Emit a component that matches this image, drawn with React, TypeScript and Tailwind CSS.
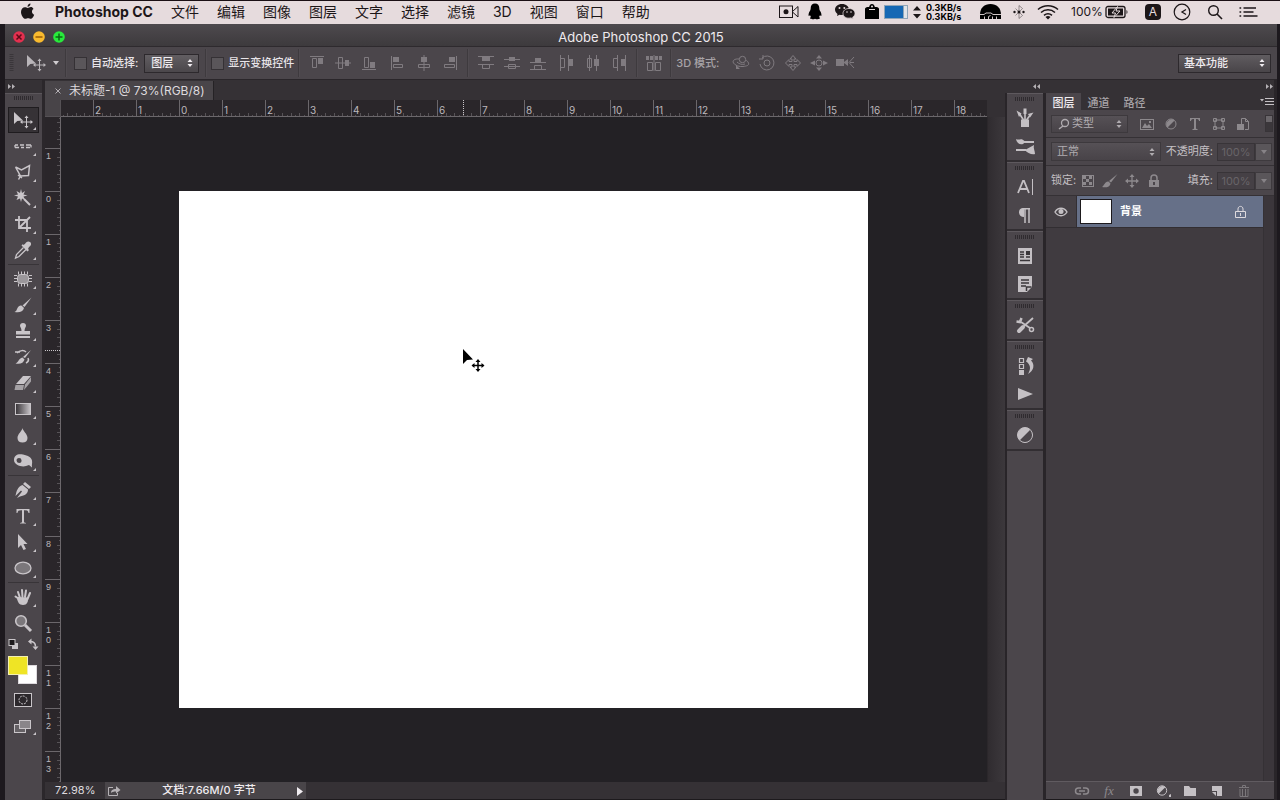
import React from "react";

type IconProps = { w?: number; h?: number; className?: string; children: React.ReactNode };

function Icon({ w = 16, h = 16, className = "", children }: IconProps) {
  return (
    <svg width={w} height={h} viewBox={`0 0 ${w} ${h}`} fill="none" stroke="currentColor" className={`block shrink-0 ${className}`} aria-hidden="true">
      {children}
    </svg>
  );
}

const solid = { fill: "currentColor", stroke: "none" };

const MENUS = ["文件", "编辑", "图像", "图层", "文字", "选择", "滤镜", "3D", "视图", "窗口", "帮助"];

function MenuBar() {
  return (
    <header className="flex h-6 shrink-0 items-center border-t border-[#1a0f14] bg-[#e6dbdd] pr-[22px] pb-[2px] pl-5 text-sm text-[#1c1618]">
      <button aria-label="Apple" className="mr-5">
        <Icon w={15} h={17}>
          <path {...solid} d="M10.500 0.500c.1 1.800-1.300 3.400-3 3.300C7.300 2.200 8.900.7 10.500.5zM13.500 6c-2.300 1.400-1.900 4.700.7 5.800-.7 1.900-2 4-3.400 4-1 0-1.400-.6-2.700-.6s-1.700.6-2.700.6C3.300 15.800 1 12 1 9c0-3.200 1.900-4.800 3.900-4.800 1.200 0 2 .7 2.900.7s1.600-.8 3.100-.8c1 0 1.900.6 2.600 1.900z" />
        </Icon>
      </button>
      <nav className="flex items-center gap-[18px] whitespace-nowrap">
        <button className="font-bold">Photoshop CC</button>
        {MENUS.map((m) => (
          <button key={m}>{m}</button>
        ))}
      </nav>
      <div className="ml-auto flex items-center">
        <Icon w={22} h={16}>
          <rect x="1.500" y="2" width="13" height="11.500" />
          <path d="M14.500 7.500l5.500-5v10.500l-5.500-5" />
          <circle {...solid} cx="8" cy="7.800" r="2.500" />
        </Icon>
        <Icon w={14} h={17} className="ml-2 text-black">
          <path {...solid} d="M7 0.500c2.800 0 4.300 1.900 4.300 4.500 0 1.300.2 1.900.8 3 1 1.500 1.500 3 1.300 4.400-.2.900-.8.500-1.400-.4-.2.900-.6 1.500-1.200 2.100 1 .4 1.400.9 1 1.500-.6.900-3.700.8-4.800.1-1 .7-4.200.8-4.800-.1-.4-.6 0-1.100 1-1.500-.6-.6-1-1.200-1.200-2.100-.6.900-1.200 1.300-1.400.4C.4 11 .9 9.500 1.900 8c.6-1.100.8-1.700.8-3C2.700 2.400 4.200.5 7 .5z" />
        </Icon>
        <Icon w={22} h={17} className="ml-3">
          <path {...solid} d="M8 1C3.800 1 1 3.500 1 6.600c0 1.800 1 3.300 2.500 4.300L3 13l2.500-1.300c.8.2 1.600.3 2.500.3C12.200 12 15 9.600 15 6.600 15 3.500 12.200 1 8 1z" />
          <path fill="currentColor" stroke="#e6dbdd" strokeWidth=".8" d="M15 5.500c-3.500 0-6 2.200-6 4.900s2.500 4.800 6 4.800c.7 0 1.400-.1 2-.3l2.200 1.100-.5-1.900c1.500-.9 2.300-2.200 2.300-3.700 0-2.700-2.500-4.900-6-4.900z" />
          <g fill="#e6dbdd" stroke="none"><circle cx="5.500" cy="5" r="1" /><circle cx="10.300" cy="5" r="1" /><circle cx="13" cy="9" r=".8" /><circle cx="17" cy="9" r=".8" /></g>
        </Icon>
        <Icon w={16} h={17} className="ml-2 text-black">
          <path {...solid} d="M1 6c0-1 1-2 2.500-2h1.700C5.300 2.500 6.300 1 8 1s2.700 1.500 2.800 3h1.700C14 4 15 5 15 6v10H1z" />
          <path stroke="#e6dbdd" d="M5 6.500h6" />
          <circle cx="8" cy="3.500" r="1" fill="#e6dbdd" stroke="none" />
        </Icon>
        <Icon w={24} h={16} className="ml-1">
          <rect x="0" y="1" width="24" height="14" fill="#8fa5b8" stroke="none" />
          <rect x="1" y="2" width="18" height="12" fill="#1668b4" stroke="none" />
          <rect x="20" y="2" width="3" height="12" fill="#dfe3e8" stroke="none" />
        </Icon>
        <Icon w={10} h={16} className="ml-1">
          <path {...solid} d="M5 2l4 4.500H1zM5 14.500L1 10h8z" />
        </Icon>
        <div className="ml-1 w-[38px] text-[9px] leading-[9px] font-bold whitespace-nowrap text-black">
          <div>0.3KB/s</div>
          <div>0.3KB/s</div>
        </div>
        <Icon w={21} h={17} className="ml-4 text-black">
          <path {...solid} d="M0 11.500C0 5 4.500 1 10.500 1S21 5 21 11.500V16H0z" />
          <path stroke="#e6dbdd" strokeWidth=".9" d="M0 11.500h4l2-1.500h5l2 1.500h8M4.500 16v-2.500M8.500 16v-2.500l2-1M12.500 16v-2.500M16.500 16v-2.500" />
        </Icon>
        <Icon w={12} h={16} className="ml-3">
          <path d="M2.500 4.500l7 7L6 14.500v-13l3.500 3-7 7" strokeOpacity=".4" />
          <circle {...solid} cx="1.500" cy="8" r="1.200" /><circle {...solid} cx="6" cy="8" r="1.500" /><circle {...solid} cx="10.500" cy="8" r="1.200" />
        </Icon>
        <Icon w={22} h={16} className="ml-3">
          <path strokeWidth="1.600" d="M1 5.500c5.500-5 14.500-5 20 0M4 8.500c4-3.600 10-3.600 14 0M7 11.300c2.500-2 5.500-2 8 0" />
          <path {...solid} d="M11 15.500l-2.500-2.500c1.500-1.200 3.500-1.200 5 0z" />
        </Icon>
        <span className="ml-3 w-[30px] text-xs whitespace-nowrap">100%</span>
        <Icon w={24} h={14} className="ml-1">
          <rect x="1" y="1.500" width="19" height="11" rx="2" strokeWidth="1.300" />
          <rect {...solid} x="3" y="3.500" width="15" height="7" />
          <path {...solid} d="M21.500 5c1.300.5 1.300 3.500 0 4z" />
          <path fill="currentColor" stroke="#e6dbdd" d="M12.500 1.500L7 8h3.500L9 12.500 15 6h-4z" />
        </Icon>
        <span className="ml-4 flex h-4 w-4 items-center justify-center rounded-sm bg-[#1c1618] text-xs text-[#e6dbdd]">A</span>
        <Icon w={18} h={18} className="ml-3">
          <circle cx="9" cy="9" r="7.800" strokeWidth="1.200" />
          <path strokeWidth="1.300" d="M13 6.500L9 9l4 2.500" />
        </Icon>
        <Icon className="ml-4">
          <circle cx="6.500" cy="6.500" r="4.800" strokeWidth="1.400" />
          <path strokeWidth="1.600" d="M10 10l5 5" />
        </Icon>
        <Icon w={19} h={14} className="ml-4">
          <path strokeWidth="1.600" d="M4.500 3H17M4.500 7H14.500M4.500 11H18.500M.5 3h1.700M.5 7h1.700M.5 11h1.700" />
        </Icon>
      </div>
    </header>
  );
}

function TitleBar() {
  return (
    <div className="grid h-[23px] shrink-0 grid-cols-[1fr_auto_1fr] items-center border-b border-[#2e2a2e] bg-gradient-to-b from-[#4e4a4e] to-[#3d3a3d] pt-[3px] pr-2 pl-2">
      <div className="flex gap-2">
        <button aria-label="关闭" className="text-[#5d0916]">
          <Icon w={12} h={12}><circle cx="6" cy="6" r="5.800" fill="#e3304f" stroke="none" /><path strokeWidth="1.500" d="M3.500 3.500l5 5M8.500 3.500l-5 5" /></Icon>
        </button>
        <button aria-label="最小化" className="text-[#985b05]">
          <Icon w={12} h={12}><circle cx="6" cy="6" r="5.800" fill="#f9ba2e" stroke="none" /><path strokeWidth="1.500" d="M2.500 6h7" /></Icon>
        </button>
        <button aria-label="缩放" className="text-[#086b12]">
          <Icon w={12} h={12}><circle cx="6" cy="6" r="5.800" fill="#28ea3c" stroke="none" /><path strokeWidth="1.500" d="M2.500 6h7M6 2.500v7" /></Icon>
        </button>
      </div>
      <h1 className="text-[13px] leading-[18px] text-[#eeeaee]">Adobe Photoshop CC 2015</h1>
    </div>
  );
}

function Grip({ vertical = false }: { vertical?: boolean }) {
  return vertical ? (
    <Icon w={5} h={18}><path stroke="#3a363a" strokeDasharray="1 1" strokeWidth="4" d="M2.500 0v18" /></Icon>
  ) : (
    <Icon w={20} h={4}><path stroke="#2f2b2f" strokeDasharray="1 1" strokeWidth="4" d="M0 2h20" /></Icon>
  );
}

const moveGlyph = (
  <>
    <path {...solid} d="M1 1v12l3.300-3L10 9.500z" />
    <path d="M13.500 5.500v11M8 11h11" />
    <path {...solid} d="M13.500 4.500l2 2.500h-4zM13.500 17.500l-2-2.500h4zM7 11l2.500-2v4zM20 11l-2.500-2v4z" />
  </>
);

const ALIGN_GROUPS: string[][][] = [
  [
    ["M1 1.500h14M3.500 3.500h4v9h-4z", "M9 3h5v6H9z"],
    ["M0 8h16M3.500 2.500h4v11h-4z", "M10 5h4v6h-4z"],
    ["M1 14.500h14M3.500 2.500h4v10h-4z", "M9 7h5v6H9z"],
  ],
  [
    ["M1.500 1v14M3.500 9.500h9v3h-9z", "M3 2h6v5H3z"],
    ["M8 0v16M2.500 9.500h11v3h-11z", "M5 2h6v5H5z"],
    ["M14.500 1v14M2.500 9.500h10v3h-10z", "M7 2h6v5H7z"],
  ],
  [
    ["M0 1.500h16M0 9.500h16M4.500 9.500h7v4h-7z", "M4 2h8v4H4z"],
    ["M0 4.500h16M0 11.500h16M4.500 9.500h7v4h-7z", "M5 2h6v4H5z"],
    ["M0 7.500h16M0 14.500h16M4.500 10.500h7v4h-7z", "M5 3h6v4H5z"],
  ],
  [
    ["M1.500 0v16M9.500 0v16M1.500 3.500h4v9h-4z", "M10 4h4v7h-4z"],
    ["M4.500 0v16M11.500 0v16M2.500 3.500h4v9h-4z", "M9 4h5v7H9z"],
    ["M6.500 0v16M14.500 0v16M2.500 3.500h4v9h-4z", "M10 4h4v7h-4z"],
  ],
];
const ALIGN_NAMES = ["顶对齐", "垂直居中", "底对齐", "左对齐", "水平居中", "右对齐", "按顶分布", "垂直分布", "按底分布", "按左分布", "水平分布", "按右分布"];

function AlignGroup({ index, className }: { index: number; className: string }) {
  return (
    <div className={`flex gap-[10px] ${className}`}>
      {ALIGN_GROUPS[index].map(([line, fill], i) => (
        <button key={line} aria-label={ALIGN_NAMES[index * 3 + i]}>
          <Icon><path d={line} /><path {...solid} d={fill} /></Icon>
        </button>
      ))}
    </div>
  );
}

function Divider() {
  return <div className="h-7 w-[2px] border-l border-[#3e3a3e] bg-[#504b50]" />;
}

function Dropdown({ label, value, options, className, textClass, icon }: { label: string; value: string; options: string[]; className: string; textClass: string; icon?: React.ReactNode }) {
  return (
    <div className={`flex items-center border bg-gradient-to-b pr-[5px] ${className} ${textClass}`}>
      {icon}
      <select aria-label={label} defaultValue={value} className="min-w-0 flex-1 appearance-none bg-transparent outline-none">
        {options.map((o) => <option key={o}>{o}</option>)}
      </select>
      <Icon w={6} h={8} className="pointer-events-none">
        <path {...solid} d="M3 0l2.500 3h-5zM3 8L.5 5h5z" />
      </Icon>
    </div>
  );
}

function CheckOption({ label, className }: { label: string; className: string }) {
  return (
    <label className={`flex items-center gap-1 whitespace-nowrap text-[#e8e4e8] ${className}`}>
      <input type="checkbox" className="h-[13px] w-[13px] appearance-none border border-[#353135] bg-[#5a565a]" />
      {label}
    </label>
  );
}

function OptionsBar() {
  return (
    <div className="flex h-[33px] shrink-0 items-center border-b border-[#2a262a] bg-[#4b464b] pr-[6px] pl-1 text-[11px] font-medium">
      <Grip vertical />
      <button aria-label="移动工具" className="ml-3 text-[#b9b5b9]"><Icon w={20} h={18}>{moveGlyph}</Icon></button>
      <button aria-label="预设" className="mr-[6px] ml-[7px] text-[#d0ccd0]"><Icon w={6} h={4}><path {...solid} d="M0 0h6L3 4z" /></Icon></button>
      <Divider />
      <CheckOption label="自动选择:" className="mr-[6px] ml-[7px]" />
      <Dropdown label="自动选择" value="图层" options={["图层", "组"]} className="h-[19px] w-[55px] border-[#2d292d] from-[#625e62] to-[#4b474b] pl-[6px]" textClass="text-[#f0ecf0]" />
      <div className="ml-[6px]"><Divider /></div>
      <CheckOption label="显示变换控件" className="mr-1 ml-1" />
      <Divider />
      <div className="flex items-center text-[#807b80]">
        <AlignGroup index={0} className="ml-[9px]" />
        <AlignGroup index={1} className="ml-[13px]" />
        <div className="ml-[9px]"><Divider /></div>
        <AlignGroup index={2} className="ml-[9px]" />
        <AlignGroup index={3} className="ml-[13px]" />
        <div className="mr-2 ml-[9px]"><Divider /></div>
        <button aria-label="自动对齐图层"><Icon><path d="M1.500 7.500h5v8h-5zM9.500 7.500h5v8h-5zM8 0v16" /><path {...solid} d="M0 1h3v4H0zM4 1h3v4H4zM9 1h3v4H9zM13 1h3v4h-3z" /></Icon></button>
        <div className="mr-1 ml-2"><Divider /></div>
        <span className="text-[11px] whitespace-nowrap text-[#a7a3a7]">3D 模式:</span>
        <div className="ml-[13px] flex gap-2">
          <button aria-label="旋转 3D 对象"><Icon w={18}><circle cx="10.500" cy="4.500" r="3.200" /><path d="M7 4C3 3.500 0 5.500 1.500 8s6 4 9.500 3.500 6.500-1 5.500-3.500-2.500-2.500-2.500-2.500M5 7c2 2 5 3 8 2" /><path {...solid} d="M4 10l4 4H4z" /></Icon></button>
          <button aria-label="滚动 3D 对象"><Icon w={18}><path d="M4 3A7 7 0 1 1 2 9M1 4h4V0" /><circle cx="9" cy="8" r="3" /></Icon></button>
          <button aria-label="拖动 3D 对象"><Icon w={18}><path d="M8 6.500V4H6l3-3.500L12 4h-2v2.500h3v-2L16.500 8 13 11.500v-2h-3V12h2l-3 3.500L6 12h2V9.500H5v2L1.500 8 5 4.500v2z" /></Icon></button>
          <button aria-label="滑动 3D 对象"><Icon w={18}><circle cx="9" cy="8" r="3" /><path {...solid} d="M9 0l3 3.500H6zM9 16l-3-3.500h6zM0 8l5-2.500v5zM18 8l-5-2.500v5z" /></Icon></button>
          <button aria-label="缩放 3D 对象"><Icon w={19}><path {...solid} d="M0 4h8v7H0zM8 7l4-3v7L8 8z" /><path d="M18 2l-5 5.500 5 5.500M14 7.500h4" /></Icon></button>
        </div>
      </div>
      <Dropdown label="工作区" value="基本功能" options={["基本功能", "绘画", "摄影"]} className="ml-auto h-[19px] w-[93px] border-[#2d292d] from-[#605c60] to-[#494549] pl-[5px]" textClass="text-[#f0ecf0]" />
    </div>
  );
}

type Tool = { name: string; flyout?: boolean; art: React.ReactNode };

const TOOL_GROUPS: Tool[][] = [
  [
    { name: "移动", flyout: true, art: moveGlyph },
    { name: "单行选框", flyout: true, art: <path strokeWidth="1.300" d="M2 8h3M7 8h4M13 8h5M2 10.500h4M8 10.500h3M13 10.500h4M2 8v2.500M18 8v2.500" /> },
    { name: "多边形套索", flyout: true, art: <path strokeWidth="1.500" d="M2.500 4l6 3 8-4.500-1 10-8 .5-5-9M7.500 13l-2 3.500M5 12l4 3" /> },
    { name: "魔棒", flyout: true, art: <><path {...solid} d="M8 0l1 4 3-2-1.500 3.500 4 1-4 1L12 11 9 9.500 8 13 7 9.500 3.500 11 5 7.500l-4-1 4-1L3.500 2 7 4z" /><path strokeWidth="2" d="M11 10l6 6" /></> },
    { name: "裁剪", flyout: true, art: <path strokeWidth="1.800" d="M6 1v12h12M2 5h12v12M7 12L17 2" /> },
    { name: "吸管", flyout: true, art: <><path {...solid} d="M10 4l2-1c1-2 3-3.500 5-2s1 4-1 5l-1 2 1 1-1.500 1.500L8.500 4.500 10 3z" /><path strokeWidth="1.300" d="M10.500 6.500l-7 7L2.500 17l3.500-1.500 7-7" /></> },
  ],
  [
    { name: "修补", flyout: true, art: <><rect x="4.500" y="4.500" width="11" height="9" rx="3" fill="#9a969a" /><path strokeDasharray="1 2" strokeWidth="3" d="M5 3h11M5 15h11M2.500 5v9M17.500 5v9" /></> },
    { name: "画笔", flyout: true, art: <><path {...solid} d="M18.500 1.500L11.500 11 9.500 9.500z" /><path {...solid} d="M9 10l2 2c-1 4-5 5-9.500 4 2-1 2-2 3-4s3-3 4.500-2z" /></> },
    { name: "仿制图章", flyout: true, art: <path {...solid} d="M10 1c2 0 3 1.200 3 2.800C13 5.500 11.500 6 11.500 9H17v3.500H3V9h5.500C8.500 6 7 5.500 7 3.800 7 2.200 8 1 10 1zM3 14h14v2H3z" /> },
    { name: "历史记录画笔", flyout: true, art: <><path {...solid} d="M18 2l-6 8-2-1zM9.500 9.500l2 2c-1 3.500-4 5-9 4 3-1 3-5 7-6z" /><path strokeWidth="1.500" d="M4 5c3-3 7-3 9-1M2 4h5M15 10c1 2 0 4-2 5" /></> },
    { name: "橡皮擦", flyout: true, art: <><path {...solid} d="M10 2h8l-7 8H3z" /><path fill="#a5a1a5" stroke="none" d="M2.500 11H11l-1 5H1.500zM12 10.500L18 3v4.500L11 16z" /></> },
    { name: "渐变", flyout: true, art: <><defs><linearGradient id="tool-gradient"><stop stopColor="#363236" /><stop offset="1" stopColor="#c9c5c9" /></linearGradient></defs><rect x="2.500" y="3.500" width="15" height="11" fill="url(#tool-gradient)" /></> },
    { name: "模糊", flyout: true, art: <path {...solid} d="M9.500 2c.5 3 5 6 5 10 0 3-2 4.500-5 4.500s-5-1.500-5-4.500c0-4 4.500-7 5-10z" /> },
    { name: "海绵", flyout: true, art: <path {...solid} fillRule="evenodd" d="M1 8c0-5 4-6.500 9-5.500s8.500 3 9 6-.5 4 0 7l-3-2.500-3 1C9 15.500 1 13 1 8zM6 6a2.500 2.500 0 1 0 .1 5A2.500 2.500 0 0 0 6 6z" /> },
  ],
  [
    { name: "钢笔", flyout: true, art: <><path {...solid} d="M12 1l6 5-2 2-6-5z" /><path {...solid} d="M9.500 4l5.500 4.500c0 4-3 6-8 7l-3 1.500 5-6.500-1-1L2.500 15c1-5 2-9 7-11z" /></> },
    { name: "文字", flyout: true, art: <path {...solid} d="M3.500 2h13v4h-1c-.3-2-1-2.700-4.500-2.700v11.200c0 1 .5 1.300 2 1.500v.5H7V16c1.500-.2 2-.5 2-1.500V3.300C5.500 3.300 4.800 4 4.500 6h-1z" /> },
    { name: "路径选择", flyout: true, art: <path {...solid} d="M5 1v14l3-3 2.500 5 2.500-1-2.500-5h4z" /> },
    { name: "椭圆", flyout: true, art: <ellipse cx="10" cy="9" rx="8" ry="5.800" fill="#7b777b" strokeWidth="1.300" /> },
  ],
  [
    { name: "抓手", flyout: true, art: <><path strokeWidth="2" strokeLinecap="round" d="M6 11L2.500 8.500M7 10L5 4M9.500 9L9 2M12 9l1-6.500M14.500 11l2.500-6" /><path {...solid} d="M5 9l10 0.500c.5 4-1 7.500-5 7.500s-5-3-6-6z" /></> },
    { name: "缩放", art: <><circle cx="8" cy="7" r="5.300" fill="#7b777b" strokeWidth="1.600" /><path strokeWidth="3" d="M12 11l6 6" /></> },
  ],
];

function ToolButton({ name, flyout, art, active }: Tool & { active?: boolean }) {
  return (
    <button
      aria-label={name}
      className={`flex h-[26px] items-center justify-center border pr-[1px] text-[#c9c5c9] ${active ? "border-[#1f1c1f] bg-[#363236]" : "border-transparent"}`}
    >
      <Icon w={27} h={20}>
        <g transform="translate(3 1)">{art}</g>
        {flyout && <path {...solid} d="M26 17v3h-3z" />}
      </Icon>
    </button>
  );
}

function Toolbox() {
  return (
    <aside className="flex w-[37px] shrink-0 flex-col bg-[#4b464b]">
      <div className="flex h-[13px] items-center bg-[#353135] pl-[3px] text-[#b5b1b5]">
        <Icon w={8} h={5}><path {...solid} d="M0 0l3 2.500L0 5zM4 0l3 2.500L4 5z" /></Icon>
      </div>
      <div className="flex h-[14px] items-start justify-center border-t border-[#5b565b] pt-[2px]"><Grip /></div>
      <div className="flex flex-col gap-px px-[3px]">
        {TOOL_GROUPS.map((group, g) => (
          <div key={g} className="flex flex-col">
            {g > 0 && <div className="mb-px h-px bg-[#383438]" />}
            {group.map((t, i) => <ToolButton key={t.name} {...t} active={g === 0 && i === 0} />)}
          </div>
        ))}
      </div>
      <div className="mt-[2px] flex justify-between px-[3px] text-[#c9c5c9]">
        <button aria-label="默认颜色"><Icon w={11} h={12}><rect x="4" y="5" width="6" height="6" fill="#c9c5c9" stroke="none" /><rect x="1" y="1.500" width="6" height="6" fill="#1d1a1d" /></Icon></button>
        <button aria-label="切换颜色"><Icon w={12} h={12}><path strokeWidth="1.500" d="M3 3.500c4 0 5.500 1.500 5.500 5" /><path {...solid} d="M1 3.500L4.500.5v6zM8.500 12L5.500 8.500h6z" /></Icon></button>
      </div>
      <div className="mt-[6px] grid grid-cols-[3px_10px_10px_9px] grid-rows-[9px_10px_9px]">
        <button aria-label="背景色" className="col-start-3 col-end-5 row-start-2 row-end-4 border border-[#dedade] bg-white" />
        <button aria-label="前景色" className="z-10 col-start-2 col-end-4 row-start-1 row-end-3 border border-[#f3efb0] bg-[#efe425]" />
      </div>
      <button aria-label="快速蒙版" className="mt-[6px] flex h-5 items-center justify-center pr-[1px] text-[#c9c5c9]">
        <Icon w={18} h={14}><rect x=".5" y=".5" width="17" height="13" fill="#2c282c" /><circle cx="9" cy="7" r="4" strokeDasharray="2 1" /></Icon>
      </button>
      <button aria-label="屏幕模式" className="mt-[6px] flex h-5 items-center justify-center text-[#c9c5c9]">
        <Icon w={26} h={18}><rect x="3.500" y="7.500" width="11" height="8" fill="#656165" /><rect x="8.500" y="3.500" width="11" height="8" fill="#898589" /><path {...solid} d="M25 15v3h-3z" /></Icon>
      </button>
    </aside>
  );
}

const UNIT = 689 / 16;

function ruler(from: number, to: number) {
  return Array.from({ length: to - from + 1 }, (_, i) => from + i);
}
const MINOR = Array.from({ length: 9 }, (_, i) => i + 1);

function HorizontalRuler() {
  const origin = 118;
  return (
    <svg height="17" className="block min-w-0 flex-1 bg-[#2a262a] text-[10px]" stroke="#6b676b" shapeRendering="crispEdges" aria-hidden="true">
      {ruler(-3, 18).map((n) => {
        const x = Math.round(origin + n * UNIT);
        return (
          <g key={n}>
            <path d={`M${x + 0.5} 0V17`} />
            {MINOR.map((m) => {
              const mx = Math.round(x + (m * UNIT) / 10) + 0.5;
              return <path key={m} d={`M${mx} ${m % 2 ? 15 : 13}V17`} strokeOpacity=".7" />;
            })}
            {n > -3 && <text x={x + 2} y="14" fill="#bcb8bc" stroke="none">{Math.abs(n)}</text>}
          </g>
        );
      })}
      <path d="M0 16.500H4000" />
      <path d="M402.500 0V16" stroke="#c9c5c9" strokeDasharray="1 1" />
    </svg>
  );
}

function VerticalRuler() {
  const origin = 74;
  return (
    <svg width="16" className="block h-full shrink-0 bg-[#2a262a] font-['Liberation_Sans',sans-serif] text-[9px]" stroke="#6b676b" shapeRendering="crispEdges" aria-hidden="true">
      {ruler(-2, 13).map((n) => {
        const y = Math.round(origin + n * UNIT);
        return (
          <g key={n}>
            <path d={`M0 ${y + 0.5}H16`} />
            {MINOR.map((m) => {
              const my = Math.round(y + (m * UNIT) / 10) + 0.5;
              return <path key={m} d={`M${m % 2 ? 14 : 12} ${my}H16`} strokeOpacity=".7" />;
            })}
            {n > -2 && String(Math.abs(n)).split("").map((d, i) => (
              <text key={i} x="1" y={y + 11 + i * 10} fill="#bcb8bc" stroke="none">{d}</text>
            ))}
          </g>
        );
      })}
      <path d="M15.500 0V4000" />
      <path d="M0 233.500H16" stroke="#c9c5c9" strokeDasharray="1 1" />
    </svg>
  );
}

function DocumentArea() {
  return (
    <main className="ml-[3px] flex min-w-0 flex-1 flex-col">
      <div className="flex h-5 shrink-0 items-end bg-[#353135]">
        <div className="flex h-[19px] items-center gap-[7px] border-r border-[#252225] bg-[#494549] pr-2 pl-[9px] text-xs whitespace-nowrap text-[#dedade]">
          <button aria-label="关闭文档" className="text-[#b5b1b5]"><Icon w={8} h={8}><path d="M1.500 1.500l5 5M6.500 1.500l-5 5" /></Icon></button>
          未标题-1 @ 73%(RGB/8)
        </div>
      </div>
      <div className="flex h-[17px] shrink-0">
        <div className="w-4 border-r border-b border-[#555155] bg-[#484448]" />
        <HorizontalRuler />
        <div className="w-[18px] bg-[#343034]" />
      </div>
      <div className="flex min-h-0 flex-1">
        <VerticalRuler />
        <div className="relative min-w-0 flex-1 overflow-hidden bg-[#232125] pt-[74px] pl-[118px]">
          <div className="h-[517px] w-[689px] bg-white" />
          <svg width="24" height="24" className="absolute top-[231px] left-[401px]" fill="#000" stroke="#000" aria-hidden="true">
            <path stroke="none" d="M1 1v15l4-4 6-.5z" />
            <path strokeWidth="1.500" fill="none" d="M16 12v11M10.500 17.500h11" />
            <path stroke="none" d="M16 11l2.500 3h-5zM16 24l-2.500-3h5zM9.500 17.500l3-2.500v5zM22.500 17.500l-3-2.500v5z" />
          </svg>
        </div>
        <div className="w-[18px] shrink-0 border-l border-[#2b272b] bg-gradient-to-r from-[#302c30] to-[#3c383c]" />
      </div>
      <footer className="flex h-[18px] shrink-0 items-center border-b border-[#1d1a1d] bg-[#353135] text-[11px] text-[#dedade]">
        <span className="w-[60px] pl-[10px]">72.98%</span>
        <div className="flex h-full w-[201px] items-center bg-[#494549] pr-[2px] pl-[2px]">
          <button aria-label="共享" className="text-[#b5b1b5]"><Icon w={14} h={12}><path d="M6 2.500H1.500v8h9V8" /><path {...solid} d="M4 8c0-3 2-4 5-4V1l4.500 4L9 8.500v-2C6.500 6.500 5 7 4 8z" /></Icon></button>
          <span className="flex-1 text-center font-medium whitespace-nowrap text-[#f0ecf0]">文档:7.66M/0 字节</span>
          <button aria-label="状态栏选项" className="text-[#f0ecf0]"><Icon w={7} h={10}><path {...solid} d="M0 1l6 4.500L0 10z" /></Icon></button>
        </div>
      </footer>
    </main>
  );
}

const DOCK: Tool[][] = [
  [
    { name: "画笔预设", art: <><path {...solid} d="M6 11.500h8V19H6z" /><path strokeWidth="1.600" d="M8.500 12L4 5M10 12V3M11.500 12L16 6" /><path {...solid} d="M1.500 2.500l5 3L4 9zM8.500 .5h3V6h-3zM18.500 4.500L13 6l2 3.500z" /></> },
    { name: "画笔", art: <><path strokeWidth="2" d="M9 6h10M1 14h10" /><path {...solid} d="M1 3c3 2 5-2 9 2.500-2 5-8 3-9-2.500zM10 14l9-5c-1 3 1 6 1 9-3 1-8-1-10-4z" /></> },
  ],
  [
    { name: "字符", art: <><path strokeWidth="1.800" d="M3 16L8 4h1l5 12M5 12h7" /><path d="M17.500 2v16" /></> },
    { name: "段落", art: <><path {...solid} d="M9 3C5 3 4 5 4 7.500S6 12 9 12z" /><path strokeWidth="1.500" d="M8 3.800h7M10 4v14M14 4v14" /></> },
  ],
  [
    { name: "信息", art: <><path {...solid} d="M3 2h14v16H3z" /><path stroke="#3a363a" strokeWidth="1.500" d="M5 6h4M5 8.500h4M5 11h4M5 14.500h10M11 11h4" /><path fill="#3a363a" stroke="none" d="M11 5h4v4h-4z" /></> },
    { name: "注释", art: <><path {...solid} d="M3 2h14v11l-5 5H3z" /><path stroke="#3a363a" strokeWidth="1.500" d="M6 6h8M6 9h8M6 12h5M11.500 17v-4h5" /></> },
  ],
  [{ name: "工具预设", art: <><path strokeWidth="4" d="M4 16l4-4" strokeLinecap="round" /><path strokeWidth="1.800" d="M9 11l9-8M6 7l9 6" /><circle cx="16.500" cy="14.500" r="2" strokeWidth="1.500" /><path strokeWidth="2.500" d="M1.500 6.500L5 7l1.500-4" /></> }],
  [
    { name: "历史记录", art: <><path d="M4.500 2.500h4v4h-4zM4.500 8.500h4v4h-4z" strokeWidth="1.200" /><path {...solid} d="M4 14h5v5H4zM11 5.500L13 1l5 2-2 1.500c4 4 3 10-3 13.500 3-5 2.500-8-.5-11.500z" /></> },
    { name: "动作", art: <path {...solid} d="M3 4l15 6-15 6z" /> },
  ],
  [{ name: "调整", art: <><circle cx="10" cy="10" r="7.500" fill="currentColor" /><path fill="#4b464b" stroke="none" d="M15 5A7 7 0 0 1 5 15z" /></> }],
];

function IconDock() {
  return (
    <div className="flex w-[41px] shrink-0 flex-col border-r-[3px] border-l-2 border-[#292529] bg-[#4b464b]">
      {DOCK.map((group) => (
        <div key={group[0].name} className="flex flex-col border-t border-b-2 border-t-[#5e595e] border-b-[#322e32]">
          <div className="flex h-[10px] items-center justify-center"><Grip /></div>
          {group.map((t) => (
            <button key={t.name} aria-label={t.name} className="flex h-7 items-center justify-center text-[#c4c0c4]">
              <Icon w={20} h={20}>{t.art}</Icon>
            </button>
          ))}
        </div>
      ))}
    </div>
  );
}

function PercentField({ id, label }: { id: string; label: string }) {
  return (
    <div className="ml-auto flex items-center">
      <label htmlFor={id} className="mr-1 whitespace-nowrap">{label}</label>
      <input id={id} defaultValue="100%" disabled className="h-[18px] w-[38px] border border-[#383438] bg-[#454045] text-center text-[11px] text-[#686468]" />
      <button aria-label={`${label}滑块`} className="flex h-[18px] w-[17px] items-center justify-center border border-[#3e3a3e] bg-[#5a565a] text-[#878387]"><Icon w={6} h={4}><path {...solid} d="M0 0h6L3 4z" /></Icon></button>
    </div>
  );
}

const FILTERS: Tool[] = [
  { name: "像素图层", art: <><rect x="1.500" y="3.500" width="13" height="10" /><path {...solid} d="M3 12l3-5 2 3 2-2 3 4zM10 5h2v2h-2z" /></> },
  { name: "调整图层", art: <><circle cx="8" cy="8" r="5" /><path {...solid} d="M4.500 11.500A5 5 0 0 1 11.500 4.500z" /></> },
  { name: "文字图层", art: <path {...solid} d="M3 2h10v3h-1c0-1.500-1-2-3-2v9c0 1 .5 1 1.500 1v1h-5v-1c1 0 1.500 0 1.500-1V3C5 3 4 3.500 4 5H3z" /> },
  { name: "形状图层", art: <path d="M4 4h8v8H4zM2.500 2.500h3v3h-3zM10.500 2.500h3v3h-3zM2.500 10.500h3v3h-3zM10.500 10.500h3v3h-3z" /> },
  { name: "智能对象", art: <><path d="M6.500 8V2.500h4l3 3v8H10" /><path d="M10.500 2.500v3h3" /><path {...solid} d="M2 8h7v6H2z" /></> },
];

const FOOTER_TOOLS: { name: string; tone: string; art: React.ReactNode }[] = [
  { name: "链接图层", tone: "text-[#8d898d]", art: <path strokeWidth="1.500" d="M7 5H4.500a3 3 0 0 0 0 6H7M9 5h2.500a3 3 0 0 1 0 6H9M5 8h6" /> },
  { name: "添加图层样式", tone: "text-[#8d898d]", art: null },
  { name: "添加图层蒙版", tone: "text-[#c4c0c4]", art: <path {...solid} fillRule="evenodd" d="M2 3h12v10H2zM8 5.300a2.700 2.700 0 1 0 .1 5.400A2.700 2.700 0 0 0 8 5.300z" /> },
  { name: "新建调整图层", tone: "text-[#c4c0c4]", art: <><circle cx="7" cy="7.500" r="4.700" /><path {...solid} d="M3.700 10.800A4.700 4.700 0 0 1 10.300 4.200zM16 11v3h-2v-2z" /></> },
  { name: "新建组", tone: "text-[#c4c0c4]", art: <path {...solid} d="M2 3h5l1.500 2H14v8H2z" /> },
  { name: "新建图层", tone: "text-[#c4c0c4]", art: <><path {...solid} d="M3 3h10v10H8V8H3z" /><path {...solid} d="M3 9h4v4z" /></> },
  { name: "删除图层", tone: "text-[#7b777b]", art: <path d="M3 4.500h10M6.500 4V2.500h3V4M4 6v7.500h8V6M6.500 6v7M9.500 6v7" /> },
];

function LayersPanel() {
  return (
    <section className="flex w-[231px] shrink-0 flex-col border-r-[3px] border-[#292529] bg-[#4b464b] text-[11px] text-[#c4c0c4]">
      <div className="flex h-[17px] shrink-0 items-stretch bg-[#353135] font-medium">
        <button className="w-[35px] bg-[#4b464b] pt-[2px] text-[#f0ecf0]">图层</button>
        <button className="w-[35px] pt-[2px] text-[#a7a3a7]">通道</button>
        <button className="w-[37px] pt-[2px] text-[#a7a3a7]">路径</button>
        <button aria-label="面板菜单" className="ml-auto self-center"><Icon w={14} h={10}><path {...solid} d="M0 2h4L2 4.500z" /><path d="M5 1.500h9M5 4.500h9M5 7.500h9" /></Icon></button>
      </div>
      <div className="flex h-7 shrink-0 items-center border-b border-[#353135] pl-[5px]">
        <Dropdown
          label="图层过滤"
          value="类型"
          options={["类型", "名称"]}
          className="h-[18px] w-[77px] border-[#3d393d] from-[#565156] to-[#484348] pl-[6px]"
          textClass="text-[#b0acb0]"
          icon={<Icon w={13} h={12} className="mr-[1px]"><circle cx="7" cy="5" r="3.500" strokeWidth="1.300" /><path strokeWidth="1.500" d="M5 8l-4 3" /></Icon>}
        />
        <div className="ml-[11px] flex gap-2 text-[#8d898d]">
          {FILTERS.map((f) => <button key={f.name} aria-label={f.name}><Icon>{f.art}</Icon></button>)}
        </div>
        <button aria-label="过滤开关" className="mr-px ml-auto flex h-[17px] w-2 flex-col border border-[#383438] bg-[#3b373b]"><span className="h-[6px] w-full bg-[#6a666a]" /></button>
      </div>
      <div className="flex h-7 shrink-0 items-center border-b border-[#353135] pr-[2px] pl-[5px]">
        <Dropdown label="混合模式" value="正常" options={["正常", "溶解"]} className="h-[19px] w-[110px] border-[#3d393d] from-[#565156] to-[#484348] pl-[5px]" textClass="text-[#b0acb0]" />
        <PercentField id="opacity" label="不透明度:" />
      </div>
      <div className="flex h-[30px] shrink-0 items-center border-b border-[#353135] pr-[2px] pl-[5px]">
        <span className="whitespace-nowrap">锁定:</span>
        <div className="ml-1 flex gap-[6px] text-[#8d898d]">
          <button aria-label="锁定透明像素"><Icon><rect x="2.500" y="2.500" width="11" height="11" /><path {...solid} d="M3 3h3v3H3zM9 3h3v3H9zM6 6h3v3H6zM3 9h3v3H3zM9 9h3v3H9z" /></Icon></button>
          <button aria-label="锁定图像像素"><Icon><path {...solid} d="M15.500 1L9 9.500 7 8zM6.500 8.500l2 2C8 14 4 15 0 14c2-1 3-6 6.500-5.500z" /></Icon></button>
          <button aria-label="锁定位置"><Icon><path d="M8 2v12M2 8h12" strokeWidth="1.300" /><path {...solid} d="M8 1l2.500 3h-5zM8 15l-2.500-3h5zM1 8l3-2.500v5zM15 8l-3 2.500v-5z" /></Icon></button>
          <button aria-label="锁定全部"><Icon><path strokeWidth="1.500" d="M5 7V5c0-4 6-4 6 0v2" /><path {...solid} fillRule="evenodd" d="M3 7h10v7H3zM7 9v3h2V9z" /></Icon></button>
        </div>
        <PercentField id="fill" label="填充:" />
      </div>
      <div className="flex min-h-0 flex-1 bg-[#403b40]">
        <ul className="min-w-0 flex-1">
          <li className="flex h-8 items-stretch border-b border-[#322e32]">
            <button aria-label="图层可见性" className="flex w-[31px] items-center justify-center border-r border-[#322e32] bg-[#454045]">
              <Icon w={14} h={10}><path strokeWidth="1.400" d="M1 5c3-5 9-5 12 0-3 5-9 5-12 0z" /><circle {...solid} cx="7" cy="4.500" r="2.500" /></Icon>
            </button>
            <button className="flex flex-1 items-center bg-[#667088] pr-4 pl-[3px] font-bold text-white">
              <span className="h-[25px] w-8 border border-[#1d1a1d] bg-white" />
              <span className="ml-2 flex-1 text-left">背景</span>
              <Icon w={13} h={14} className="text-[#dedade]"><path d="M4 6V4c0-3.500 5-3.500 5 0v2M1.500 6.500h10v6h-10z" /><path {...solid} d="M6 8h1v3H6z" /></Icon>
            </button>
          </li>
        </ul>
        <div className="w-[11px] shrink-0 border-l border-[#353135] bg-[#3b363b]" />
      </div>
      <div className="flex h-[19px] shrink-0 items-center gap-[11px] border-t border-b border-t-[#605b60] border-b-[#1d1a1d] pl-7">
        {FOOTER_TOOLS.map((t) => (
          <button key={t.name} aria-label={t.name} className={`flex h-4 w-4 items-center justify-center ${t.tone}`}>
            {t.art ? <Icon>{t.art}</Icon> : <em className="font-['Liberation_Serif',serif] text-[13px]">fx</em>}
          </button>
        ))}
      </div>
    </section>
  );
}

function RightDock() {
  return (
    <div className="flex shrink-0 flex-col">
      <div className="flex h-[13px] shrink-0 items-center justify-between border-r-[3px] border-[#292529] bg-[#353135] pl-7 text-[#b5b1b5]">
        <Icon w={8} h={5}><path {...solid} d="M3 0L0 2.500 3 5zM7 0L4 2.500 7 5z" /></Icon>
        <Icon w={8} h={5}><path {...solid} d="M0 0l3 2.500L0 5zM4 0l3 2.500L4 5z" /></Icon>
      </div>
      <div className="flex min-h-0 flex-1">
        <IconDock />
        <LayersPanel />
      </div>
    </div>
  );
}

export default function App() {
  return (
    <div className="flex h-screen min-h-[760px] flex-col overflow-hidden bg-[#1d191e] font-['Inter','Noto_Sans_CJK_SC',sans-serif]">
      <MenuBar />
      <div className="mr-[3px] ml-[5px] flex min-h-0 flex-1 flex-col rounded-t-md bg-[#2b272b]">
        <TitleBar />
        <OptionsBar />
        <div className="flex min-h-0 flex-1">
          <Toolbox />
          <DocumentArea />
          <RightDock />
        </div>
      </div>
    </div>
  );
}
